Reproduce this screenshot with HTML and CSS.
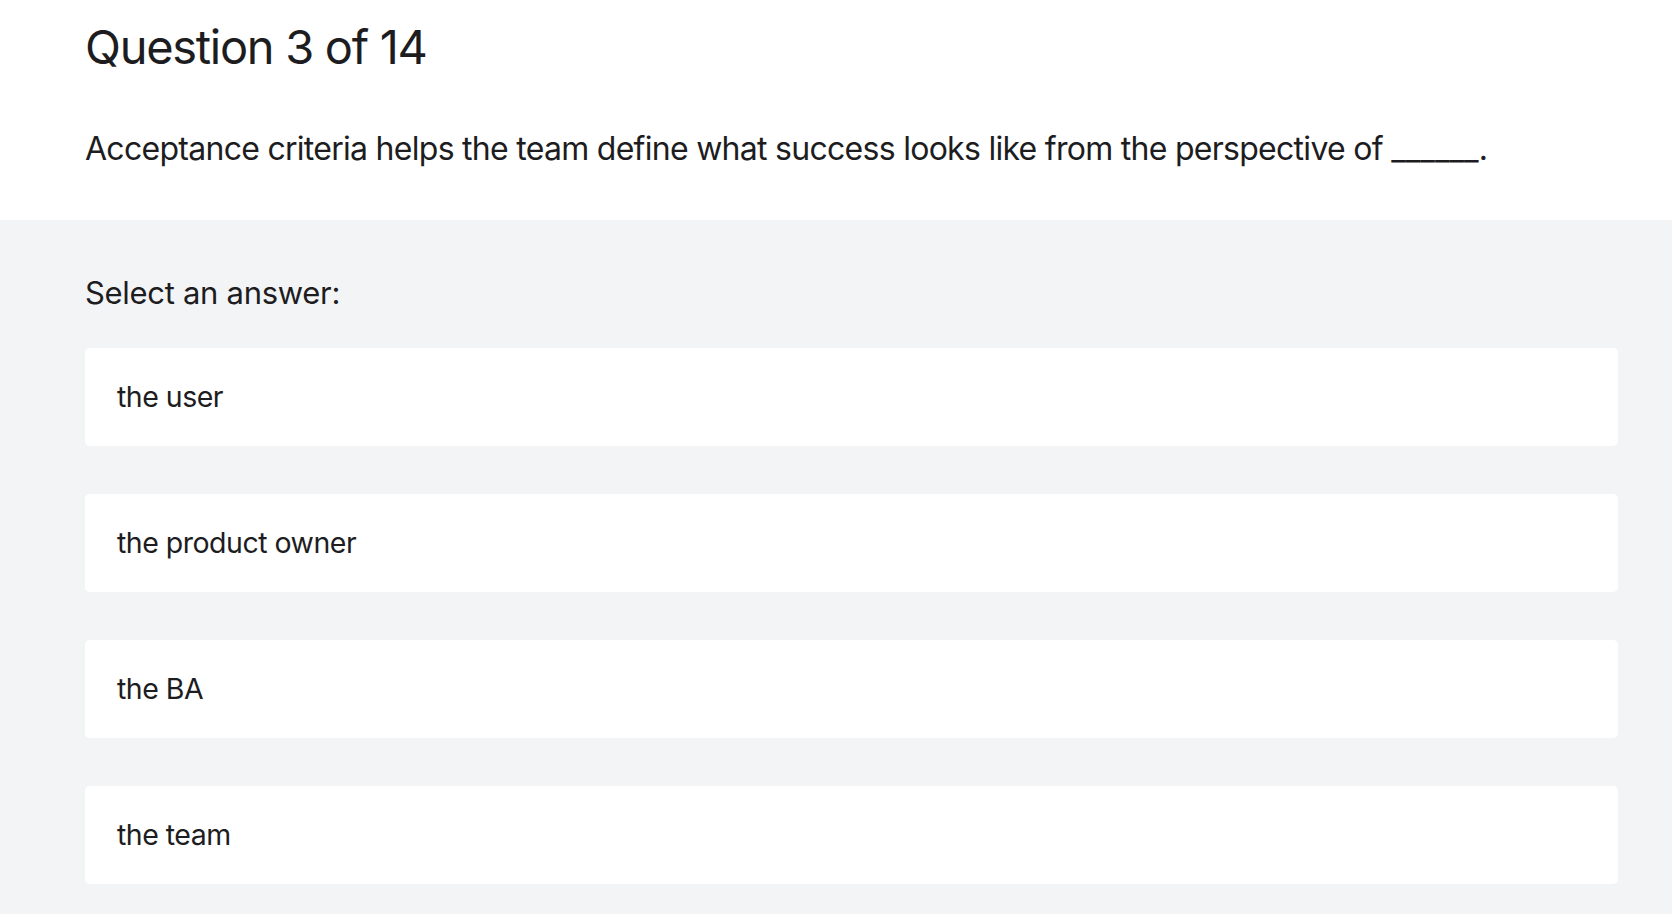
FILE: index.html
```html
<!DOCTYPE html>
<html lang="en">
<head>
<meta charset="utf-8">
<title>Question 3 of 14</title>
<link rel="stylesheet" href="styles.css">
</head>
<body>
  <header class="question-head">
    <h1 class="question-count">Question 3 of 14</h1>
    <p class="question-text">Acceptance criteria helps the team define what success looks like from the perspective of <span class="blank">______</span>.</p>
  </header>
  <main class="answers">
    <p class="answers-label">Select an answer:</p>
    <ul class="answer-list">
      <li class="answer">the user</li>
      <li class="answer">the product owner</li>
      <li class="answer">the BA</li>
      <li class="answer">the team</li>
    </ul>
  </main>
</body>
</html>
```

FILE: styles.css
```css
html, body {
  margin: 0;
  padding: 0;
}

body {
  font-family: Inter, "Noto Sans", "Liberation Sans", sans-serif;
  color: #1d1d1f;
  background: #f3f4f6;
  min-height: 914px;
}

.question-head {
  background: #ffffff;
  box-sizing: border-box;
  height: 220px;
  padding: 19px 54px 0 85px;
}

.question-count {
  margin: 0;
  font-size: 47px;
  line-height: 56px;
  font-weight: 400;
  letter-spacing: -1.3px;
}

.question-text {
  margin: 54px 0 0 0;
  font-size: 32px;
  line-height: 40px;
  font-weight: 400;
  letter-spacing: -0.72px;
}

.blank {
  letter-spacing: 0;
}

.answers {
  padding: 53px 54px 40px 85px;
}

.answers-label {
  margin: 0;
  font-size: 31px;
  line-height: 40px;
  letter-spacing: -0.3px;
}

.answer-list {
  list-style: none;
  margin: 35px 0 0 0;
  padding: 0;
  display: flex;
  flex-direction: column;
  gap: 48px;
}

.answer {
  background: #ffffff;
  border-radius: 5px;
  height: 98px;
  box-sizing: border-box;
  padding: 0 32px;
  display: flex;
  align-items: center;
  font-size: 28.5px;
  line-height: 36px;
  letter-spacing: -0.5px;
}
```
